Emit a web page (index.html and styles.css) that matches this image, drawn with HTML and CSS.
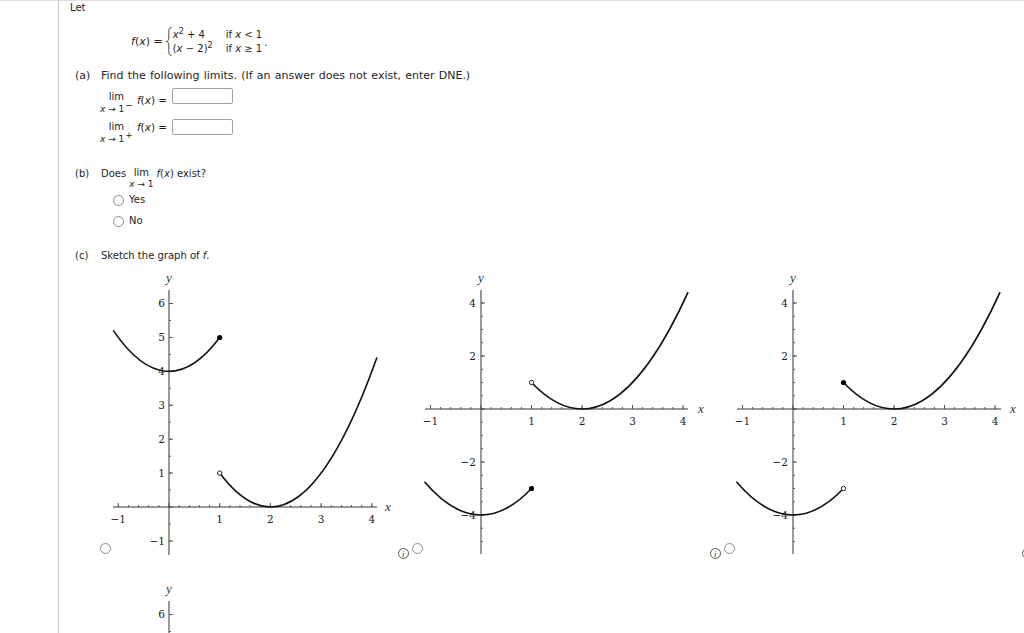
FILE: index.html
```html
<!DOCTYPE html>
<html>
<head>
<meta charset="utf-8">
<link rel="stylesheet" href="styles.css">
</head>
<body>
<div class="frame">
  <div class="content">
    <div class="line let">Let</div>

    <div class="fdef">
      <span class="fname"><i>f</i>(<i>x</i>) =</span>
      <svg class="brace" width="6" height="29" viewBox="0 0 6 29"><path d="M5.5,0.5 C3,0.5 2.8,2.5 2.8,5.5 L2.8,11 C2.8,13.3 1.8,14.3 0.4,14.5 C1.8,14.7 2.8,15.7 2.8,18 L2.8,23.5 C2.8,26.5 3,28.5 5.5,28.5" /></svg>
      <div class="cases">
        <span><i>x</i><span class="sup">2</span> + 4</span><span>if <i>x</i> &lt; 1</span>
        <span>(<i>x</i> − 2)<span class="sup">2</span></span><span>if <i>x</i> ≥ 1</span>
      </div>
      <span class="period">.</span>
    </div>

    <div class="line part part-a"><span class="plabel">(a)</span><span>Find the following limits. (If an answer does not exist, enter DNE.)</span></div>

    <div class="limrow limrow1">
      <div class="lim"><span class="limw">lim</span><span class="limsub"><i>x</i> → 1<span class="lsup">−</span></span></div>
      <span class="fx"><i>f</i>(<i>x</i>) =</span>
      <span class="box"></span>
    </div>
    <div class="limrow limrow2">
      <div class="lim"><span class="limw">lim</span><span class="limsub"><i>x</i> → 1<span class="lsup">+</span></span></div>
      <span class="fx"><i>f</i>(<i>x</i>) =</span>
      <span class="box"></span>
    </div>

    <div class="part part-b">
      <span class="plabel line">(b)</span><span class="line">Does</span>
      <div class="lim blim"><span class="limw">lim</span><span class="limsub bsub"><i>x</i> → 1</span></div>
      <span class="line bfx"><i>f</i>(<i>x</i>) exist?</span>
    </div>

    <div class="choice choice-yes"><span class="radio"></span><span>Yes</span></div>
    <div class="choice choice-no"><span class="radio"></span><span>No</span></div>

    <div class="line part part-c"><span class="plabel">(c)</span><span>Sketch the graph of <i>f</i>.</span></div>

    <div class="graphs">
      <!-- option 1 -->
      <div class="cell">
        <span class="radio gradio"></span>
        <svg class="plot" width="280" height="290" viewBox="0 0 280 290">
          <g class="axes">
            <line x1="1" y1="239" x2="265" y2="239"/>
            <line x1="57" y1="22" x2="57" y2="287"/>
          </g>
          <g class="ticks">
            <line x1="5.8" y1="238" x2="260.3" y2="238" stroke-width="2" stroke-dasharray="1 9.14"/>
            <line x1="5.8" y1="237" x2="260.3" y2="237" stroke-width="4" stroke-dasharray="1 49.7"/>
            <line x1="58" y1="35.1" x2="58" y2="273.4" stroke-width="2" stroke-dasharray="1 15.95"/>
            <line x1="59" y1="35.1" x2="59" y2="273.4" stroke-width="4" stroke-dasharray="1 32.9"/>
          </g>
          <g class="tl tlx">
            <text x="6.3" y="255">−1</text>
            <text x="107.7" y="255">1</text>
            <text x="158.4" y="255">2</text>
            <text x="209.1" y="255">3</text>
            <text x="259.8" y="255">4</text>
          </g>
          <g class="tl tly">
            <text x="53" y="39.4">6</text>
            <text x="53" y="73.3">5</text>
            <text x="53" y="107.2">4</text>
            <text x="53" y="141.1">3</text>
            <text x="53" y="175">2</text>
            <text x="53" y="208.9">1</text>
            <text x="53" y="276.7">−1</text>
          </g>
          <text class="alabel" x="57" y="14">y</text>
          <text class="alabel" x="276" y="243">x</text>
          <g class="curve">
            <path d="M1.2,62.4 Q54.5,140.7 107.7,69.5"/>
            <path d="M107.7,205.1 Q186.3,310.2 264.9,89.5"/>
          </g>
          <circle class="dot" cx="107.7" cy="69.5" r="2.6"/>
          <circle class="hole" cx="107.7" cy="205.1" r="2.2"/>
        </svg>
        <svg class="info" width="11" height="11" viewBox="0 0 11 11"><circle cx="5.5" cy="5.5" r="5"/><text x="5.2" y="8.6">i</text></svg>
      </div>

      <!-- option 2 -->
      <div class="cell">
        <span class="radio gradio"></span>
        <svg class="plot" width="280" height="290" viewBox="0 0 280 290">
          <g class="axes">
            <line x1="1" y1="141" x2="264" y2="141"/>
            <line x1="57" y1="22" x2="57" y2="286"/>
          </g>
          <g class="ticks">
            <line x1="6" y1="140" x2="259.5" y2="140" stroke-width="2" stroke-dasharray="1 9.1"/>
            <line x1="6" y1="139" x2="259.5" y2="139" stroke-width="4" stroke-dasharray="1 49.5"/>
            <line x1="58" y1="34.5" x2="58" y2="274" stroke-width="2" stroke-dasharray="1 12.25"/>
            <line x1="59" y1="34.5" x2="59" y2="274" stroke-width="4" stroke-dasharray="1 52"/>
          </g>
          <g class="tl tlx">
            <text x="6.5" y="157">−1</text>
            <text x="107.5" y="157">1</text>
            <text x="158" y="157">2</text>
            <text x="208.5" y="157">3</text>
            <text x="259" y="157">4</text>
          </g>
          <g class="tl tly">
            <text x="52" y="38.8">4</text>
            <text x="52" y="91.8">2</text>
            <text x="52" y="197.8">−2</text>
            <text x="52" y="250.8">−4</text>
          </g>
          <text class="alabel" x="57" y="14">y</text>
          <text class="alabel" x="277" y="145">x</text>
          <g class="curve">
            <path d="M107.5,114.5 Q185.8,196.65 264.05,24.1"/>
            <path d="M0.44,213.76 Q54,276.7 107.5,220.5"/>
          </g>
          <circle class="hole" cx="107.5" cy="114.5" r="2.2"/>
          <circle class="dot" cx="107.5" cy="220.5" r="2.6"/>
        </svg>
        <svg class="info" width="11" height="11" viewBox="0 0 11 11"><circle cx="5.5" cy="5.5" r="5"/><text x="5.2" y="8.6">i</text></svg>
      </div>

      <!-- option 3 -->
      <div class="cell">
        <span class="radio gradio"></span>
        <svg class="plot" width="280" height="290" viewBox="0 0 280 290">
          <g class="axes">
            <line x1="1" y1="141" x2="265" y2="141"/>
            <line x1="57" y1="22" x2="57" y2="286"/>
          </g>
          <g class="ticks">
            <line x1="6" y1="140" x2="259.5" y2="140" stroke-width="2" stroke-dasharray="1 9.1"/>
            <line x1="6" y1="139" x2="259.5" y2="139" stroke-width="4" stroke-dasharray="1 49.5"/>
            <line x1="58" y1="34.5" x2="58" y2="274" stroke-width="2" stroke-dasharray="1 12.25"/>
            <line x1="59" y1="34.5" x2="59" y2="274" stroke-width="4" stroke-dasharray="1 52"/>
          </g>
          <g class="tl tlx">
            <text x="6.5" y="157">−1</text>
            <text x="107.5" y="157">1</text>
            <text x="158" y="157">2</text>
            <text x="208.5" y="157">3</text>
            <text x="259" y="157">4</text>
          </g>
          <g class="tl tly">
            <text x="52" y="38.8">4</text>
            <text x="52" y="91.8">2</text>
            <text x="52" y="197.8">−2</text>
            <text x="52" y="250.8">−4</text>
          </g>
          <text class="alabel" x="57" y="14">y</text>
          <text class="alabel" x="277" y="145">x</text>
          <g class="curve">
            <path d="M107.5,114.5 Q185.8,196.65 264.05,24.1"/>
            <path d="M0.44,213.76 Q54,276.7 107.5,220.5"/>
          </g>
          <circle class="dot" cx="107.5" cy="114.5" r="2.6"/>
          <circle class="hole" cx="107.5" cy="220.5" r="2.2"/>
        </svg>
        <svg class="info" width="11" height="11" viewBox="0 0 11 11"><circle cx="5.5" cy="5.5" r="5"/><text x="5.2" y="8.6">i</text></svg>
      </div>

      <!-- option 4 -->
      <div class="cell">
        <span class="radio gradio"></span>
        <svg class="plot" width="280" height="290" viewBox="0 0 280 290">
          <g class="axes">
            <line x1="1" y1="239" x2="265" y2="239"/>
            <line x1="57" y1="22" x2="57" y2="287"/>
          </g>
          <g class="ticks">
            <line x1="5.8" y1="238" x2="260.3" y2="238" stroke-width="2" stroke-dasharray="1 9.14"/>
            <line x1="5.8" y1="237" x2="260.3" y2="237" stroke-width="4" stroke-dasharray="1 49.7"/>
            <line x1="58" y1="35.1" x2="58" y2="273.4" stroke-width="2" stroke-dasharray="1 15.95"/>
            <line x1="59" y1="35.1" x2="59" y2="273.4" stroke-width="4" stroke-dasharray="1 32.9"/>
          </g>
          <g class="tl tlx">
            <text x="6.3" y="255">−1</text>
            <text x="107.7" y="255">1</text>
            <text x="158.4" y="255">2</text>
            <text x="209.1" y="255">3</text>
            <text x="259.8" y="255">4</text>
          </g>
          <g class="tl tly">
            <text x="53" y="39.4">6</text>
            <text x="53" y="73.3">5</text>
            <text x="53" y="107.2">4</text>
            <text x="53" y="141.1">3</text>
            <text x="53" y="175">2</text>
            <text x="53" y="208.9">1</text>
            <text x="53" y="276.7">−1</text>
          </g>
          <text class="alabel" x="57" y="14">y</text>
          <text class="alabel" x="276" y="243">x</text>
          <g class="curve">
            <path d="M1.2,62.4 Q54.5,140.7 107.7,69.5"/>
            <path d="M107.7,205.1 Q186.3,310.2 264.9,89.5"/>
          </g>
          <circle class="hole" cx="107.7" cy="69.5" r="2.2"/>
          <circle class="dot" cx="107.7" cy="205.1" r="2.6"/>
        </svg>
        <svg class="info" width="11" height="11" viewBox="0 0 11 11"><circle cx="5.5" cy="5.5" r="5"/><text x="5.2" y="8.6">i</text></svg>
      </div>
    </div>
  </div>
</div>
</body>
</html>
```

FILE: styles.css
```css
html, body {
  margin: 0;
  padding: 0;
  overflow: hidden;
}
body {
  width: 1024px;
  height: 633px;
  background: #fff;
  color: #1e1e1e;
  font-family: "DejaVu Sans", Verdana, sans-serif;
  font-size: 10px;
}
.frame {
  border-top: 1px solid #dedede;
}
.content {
  margin-left: 58px;
  border-left: 1px solid #c6c6c6;
  padding: 1px 0 0 11px;
  min-height: 640px;
}
.line {
  line-height: 12px;
}
i {
  font-style: italic;
}
.sup {
  font-size: 8px;
  vertical-align: 4px;
  line-height: 0;
}

/* function definition */
.fdef {
  margin-top: 13px;
  margin-left: 61px;
  display: flex;
  align-items: center;
}
.fname {
  font-size: 11px;
  line-height: 12px;
  margin-top: 1px;
}
.brace {
  margin-left: 3px;
  margin-right: 1px;
  fill: none;
  stroke: #333;
  stroke-width: 0.9;
}
.cases {
  display: grid;
  grid-template-columns: 53px auto;
  line-height: 14px;
  padding-top: 1px;
}
.period {
  line-height: 12px;
  margin-left: 2px;
  margin-top: 2px;
}

/* parts */
.part {
  padding-left: 5px;
  display: flex;
}
.plabel {
  width: 26px;
  flex-shrink: 0;
}
.part-a {
  margin-top: 13px;
  font-size: 11px;
  line-height: 13px;
  word-spacing: 0.7px;
}

/* limits */
.limrow {
  display: flex;
  align-items: flex-start;
  margin-left: 30px;
}
.limrow1 {
  margin-top: 6px;
}
.limrow1 .lim {
  padding-top: 3px;
}
.limrow1 .fx {
  margin-top: 6px;
}
.limrow2 {
  margin-top: 3px;
}
.limrow2 .lim {
  padding-top: 2px;
}
.limrow2 .fx {
  margin-top: 2px;
}
.lim {
  display: flex;
  flex-direction: column;
  align-items: center;
}
.limw {
  line-height: 12px;
}
.limsub {
  font-size: 9px;
  line-height: 13px;
  white-space: nowrap;
}
.lsup {
  font-size: 9px;
  vertical-align: 4px;
  line-height: 0;
  margin-left: 1px;
}
.fx {
  line-height: 12px;
  margin-left: 4px;
  font-size: 10.5px;
}
.box {
  margin-left: 5px;
  width: 59px;
  height: 14px;
  border: 1px solid #a0a0a0;
  border-radius: 2px;
  background: #fff;
}

.part-b {
  margin-top: 22px;
  align-items: flex-start;
}
.blim {
  margin-left: 3px;
  margin-top: -1px;
}
.bsub {
  line-height: 10px;
}
.bfx {
  margin-left: 3px;
}

/* choices */
.choice {
  display: flex;
  align-items: center;
  margin-left: 43px;
  line-height: 12px;
}
.choice-yes {
  margin-top: 5px;
}
.choice-no {
  margin-top: 9px;
}
.radio {
  display: inline-block;
  box-sizing: border-box;
  width: 11px;
  height: 11px;
  border: 1px solid #8a8a8a;
  border-radius: 50%;
  background: #fff;
  margin-right: 5px;
  flex-shrink: 0;
}
.part-c {
  margin-top: 23px;
}

/* graphs */
.graphs {
  margin-top: 6px;
  margin-left: 30px;
  width: 940px;
  display: flex;
  flex-wrap: wrap;
  column-gap: 3px;
  row-gap: 21px;
}
.cell {
  display: flex;
  align-items: flex-end;
  flex-shrink: 0;
}
.gradio {
  margin: 0 0 4px 0;
}
.plot {
  display: block;
  margin-left: 1px;
  overflow: visible;
}
.info {
  display: block;
  margin-left: 6px;
  margin-bottom: -1px;
  fill: none;
  stroke: #444;
  stroke-width: 0.9;
}
.info text {
  fill: #333;
  stroke: none;
  font-family: "Liberation Serif", "DejaVu Serif", serif;
  font-style: italic;
  font-size: 9px;
  text-anchor: middle;
}
.axes line {
  stroke: #333;
  stroke-width: 1;
}
.ticks line {
  stroke: #555;
}
.tl text {
  font-family: "DejaVu Serif", serif;
  font-size: 10.5px;
  fill: #222;
}
.tlx text {
  text-anchor: middle;
}
.tly text {
  text-anchor: end;
}
.alabel {
  font-family: "Liberation Serif", "DejaVu Serif", serif;
  font-style: italic;
  font-size: 13px;
  fill: #333;
  text-anchor: middle;
}
.curve path {
  fill: none;
  stroke: #111;
  stroke-width: 1.6;
}
.dot {
  fill: #000;
}
.hole {
  fill: #fff;
  stroke: #222;
  stroke-width: 1;
}
```
